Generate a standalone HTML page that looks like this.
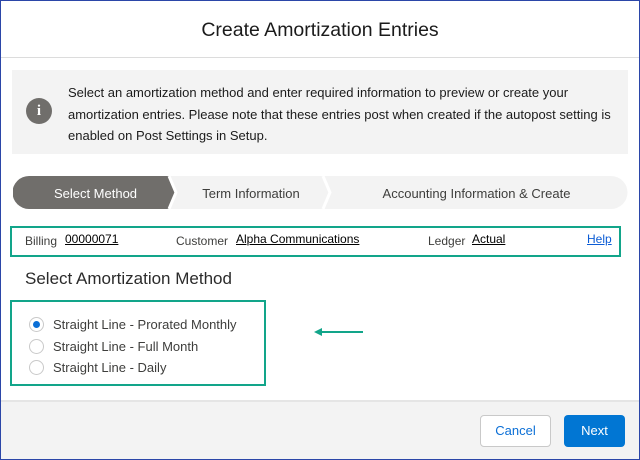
<!DOCTYPE html>
<html><head><style>
*{margin:0;padding:0;box-sizing:border-box}
body{width:640px;height:460px;position:relative;font-family:"Liberation Sans",sans-serif;color:#181818;background:#fff;overflow:hidden}
.frame{position:absolute;left:0;top:0;width:640px;height:460px;border:1px solid #2b46a8;z-index:10;pointer-events:none}
.a{position:absolute}
</style></head><body>
<div class="frame"></div>
<div class="a" style="left:0;top:19px;width:640px;text-align:center;font-size:19.5px;color:#1b1b1b">Create Amortization Entries</div>
<div class="a" style="left:0;top:57px;width:640px;height:1px;background:#dcdcdc"></div>
<div class="a" style="left:12px;top:70px;width:616px;height:84px;background:#f3f3f3"></div>
<div class="a" style="left:26px;top:98px;width:26px;height:26px;border-radius:50%;background:#706e6b;color:#fff;font-weight:bold;font-size:15px;text-align:center;line-height:26px;font-family:'Liberation Serif',serif">i</div>
<div class="a" style="left:68px;top:82px;width:556px;font-size:13px;line-height:21.5px;color:#1b1b1b">Select an amortization method and enter required information to preview or create your amortization entries. Please note that these entries post when created if the autopost setting is enabled on Post Settings in Setup.</div>
<svg class="a" style="left:13px;top:176px" width="615" height="33">
<path d="M16 0 H598 A16 16 0 0 1 598 33 H16 A16 16 0 0 1 16 0Z" fill="#f3f3f3"/>
<path d="M16 0 H156 L163 16.5 L156 33 H16 A16 16 0 0 1 16 0Z" fill="#706e6b"/>
<path d="M156 0 L163 16.5 L156 33" fill="none" stroke="#fff" stroke-width="3"/>
<path d="M310 0 L317 16.5 L310 33" fill="none" stroke="#fff" stroke-width="3"/>
</svg>
<div class="a" style="left:13px;top:186px;width:165px;text-align:center;font-size:13px;color:#fff">Select Method</div>
<div class="a" style="left:170px;top:186px;width:162px;text-align:center;font-size:13px;color:#3e3e3c">Term Information</div>
<div class="a" style="left:325px;top:186px;width:303px;text-align:center;font-size:13px;color:#3e3e3c">Accounting Information &amp; Create</div>
<div class="a" style="left:10px;top:226px;width:611px;height:31px;border:2px solid #12a58a"></div>
<div class="a" style="left:25px;top:234px;font-size:12px;color:#3e3e3c">Billing</div>
<div class="a" style="left:65px;top:232px;font-size:12px;text-decoration:underline;color:#000">00000071</div>
<div class="a" style="left:176px;top:234px;font-size:12px;color:#3e3e3c">Customer</div>
<div class="a" style="left:236px;top:232px;font-size:12px;text-decoration:underline;color:#000">Alpha Communications</div>
<div class="a" style="left:428px;top:234px;font-size:12px;color:#3e3e3c">Ledger</div>
<div class="a" style="left:472px;top:232px;font-size:12px;text-decoration:underline;color:#000">Actual</div>
<div class="a" style="left:587px;top:232px;font-size:12px;text-decoration:underline;color:#0b5cd5">Help</div>
<div class="a" style="left:25px;top:269px;font-size:17px;color:#2b2b2b">Select Amortization Method</div>
<div class="a" style="left:10px;top:300px;width:256px;height:86px;border:2px solid #12a58a"></div>
<div class="a" style="left:29px;top:317px;width:15px;height:15px;border:1px solid #c9c9c9;border-radius:50%"><div style="margin:3px;width:7px;height:7px;border-radius:50%;background:#0b6fd6"></div></div>
<div class="a" style="left:29px;top:338.5px;width:15px;height:15px;border:1px solid #c9c9c9;border-radius:50%"></div>
<div class="a" style="left:29px;top:360px;width:15px;height:15px;border:1px solid #c9c9c9;border-radius:50%"></div>
<div class="a" style="left:53px;top:317px;font-size:13px;color:#3e3e3c">Straight Line - Prorated Monthly</div>
<div class="a" style="left:53px;top:338.5px;font-size:13px;color:#3e3e3c">Straight Line - Full Month</div>
<div class="a" style="left:53px;top:360px;font-size:13px;color:#3e3e3c">Straight Line - Daily</div>
<svg class="a" style="left:312px;top:326px" width="55" height="12"><path d="M4 6 H51" stroke="#12a58a" stroke-width="2"/><path d="M2 6 L10 2 L10 10Z" fill="#12a58a"/></svg>
<div class="a" style="left:0;top:400px;width:640px;height:60px;background:#f3f3f3;border-top:2px solid #e5e5e5"></div>
<div class="a" style="left:480px;top:415px;width:71px;height:32px;border:1px solid #c9c9c9;border-radius:4px;background:#fff;color:#0b6fd6;font-size:13px;text-align:center;line-height:30px">Cancel</div>
<div class="a" style="left:564px;top:415px;width:61px;height:32px;border-radius:4px;background:#0176d3;color:#fff;font-size:13px;text-align:center;line-height:32px">Next</div>
</body></html>
